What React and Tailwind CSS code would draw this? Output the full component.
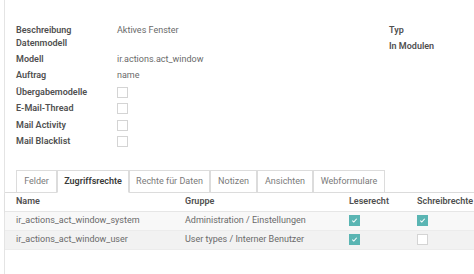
import React from "react";

/* form rows on the left */
const fields = [
    { label: "Beschreibung Datenmodell", value: "Aktives Fenster", double: true },
    { label: "Modell", value: "ir.actions.act_window" },
    { label: "Auftrag", value: "name" },
    { label: "Übergabemodelle", check: true },
    { label: "E-Mail-Thread", check: true },
    { label: "Mail Activity", check: true },
    { label: "Mail Blacklist", check: true },
];

const tabs = [
    { name: "Felder", w: "w-[41px]" },
    { name: "Zugriffsrechte", w: "w-[72px]", active: true },
    { name: "Rechte für Daten", w: "w-[81px]" },
    { name: "Notizen", w: "w-[47px]" },
    { name: "Ansichten", w: "w-[56px]" },
    { name: "Webformulare", w: "w-[72px]" },
];

const rows = [
    {
        name: "ir_actions_act_window_system",
        group: "Administration / Einstellungen",
        read: true,
        write: true,
        bg: "bg-[#f8f8f8]",
    },
    {
        name: "ir_actions_act_window_user",
        group: "User types / Interner Benutzer",
        read: true,
        write: false,
        bg: "bg-[#f2f2f2]",
    },
];

function EmptyBox() {
    return <div className="h-[11px] w-[11px] border border-[#d4d4d4] bg-white" />;
}

function CheckBox({ on }) {
    if (!on) return <EmptyBox />;
    return (
        <div className="flex h-[11px] w-[11px] items-center justify-center bg-[#5ab5b3]">
            <svg width="7" height="7" viewBox="0 0 8 8">
                <path d="M1.5 4.2 L3.2 5.8 L6.5 2" fill="none" stroke="white" strokeWidth="1.2" />
            </svg>
        </div>
    );
}

export default function App() {
    return (
        <div className="h-[274px] w-[474px] overflow-hidden bg-white font-['Roboto',sans-serif] text-[9px] leading-[13px] text-[#6a6a6a]">
            <div className="ml-[4px] h-full border-l border-[#e4e4e4] pt-[22px]">
                {/* ===== top form ===== */}
                <div className="flex pl-[11px]">
                    <div className="w-[373px]">
                        {fields.map((f) => (
                            <div key={f.label} className="flex items-center py-[1.7px]">
                                <div
                                    className={`font-semibold text-[#505050] ${
                                        f.double ? "w-[70px] self-start" : "w-[101px]"
                                    }`}
                                >
                                    {f.label}
                                </div>
                                {f.double && <div className="w-[31px]" />}
                                {f.check ? (
                                    <EmptyBox />
                                ) : (
                                    <div className={f.double ? "self-start" : ""}>{f.value}</div>
                                )}
                            </div>
                        ))}
                    </div>
                    <div className="font-semibold text-[#505050]">
                        <div className="py-[1.5px]">Typ</div>
                        <div className="py-[1.5px]">In Modulen</div>
                    </div>
                </div>

                {/* ===== tabs ===== */}
                <div className="mt-[20px] flex border-b border-[#dcdcdc] pl-[11px]">
                    {tabs.map((t) => (
                        <div
                            key={t.name}
                            className={`${t.w} -mb-px flex h-[23px] items-center justify-center border border-[#dcdcdc] ${
                                t.active
                                    ? "border-b-white bg-white font-semibold text-[#3a3a3a]"
                                    : "text-[#7a7a7a]"
                            }`}
                        >
                            {t.name}
                        </div>
                    ))}
                </div>

                {/* ===== access table ===== */}
                <div className="flex h-[19px] items-center border-b border-[#e6e6e6] pl-[11px] font-semibold text-[#505050] shadow-[0_1px_2px_rgba(0,0,0,0.06)]">
                    <div className="w-[169px]">Name</div>
                    <div className="w-[164px]">Gruppe</div>
                    <div className="w-[68px]">Leserecht</div>
                    <div className="whitespace-nowrap">Schreibrechte</div>
                </div>
                {rows.map((r) => (
                    <div
                        key={r.name}
                        className={`flex h-[19px] items-center border-b border-[#ececec] pl-[11px] ${r.bg}`}
                    >
                        <div className="w-[169px]">{r.name}</div>
                        <div className="w-[164px]">{r.group}</div>
                        <div className="w-[68px]">
                            <CheckBox on={r.read} />
                        </div>
                        <div>
                            <CheckBox on={r.write} />
                        </div>
                    </div>
                ))}
            </div>
        </div>
    );
}
